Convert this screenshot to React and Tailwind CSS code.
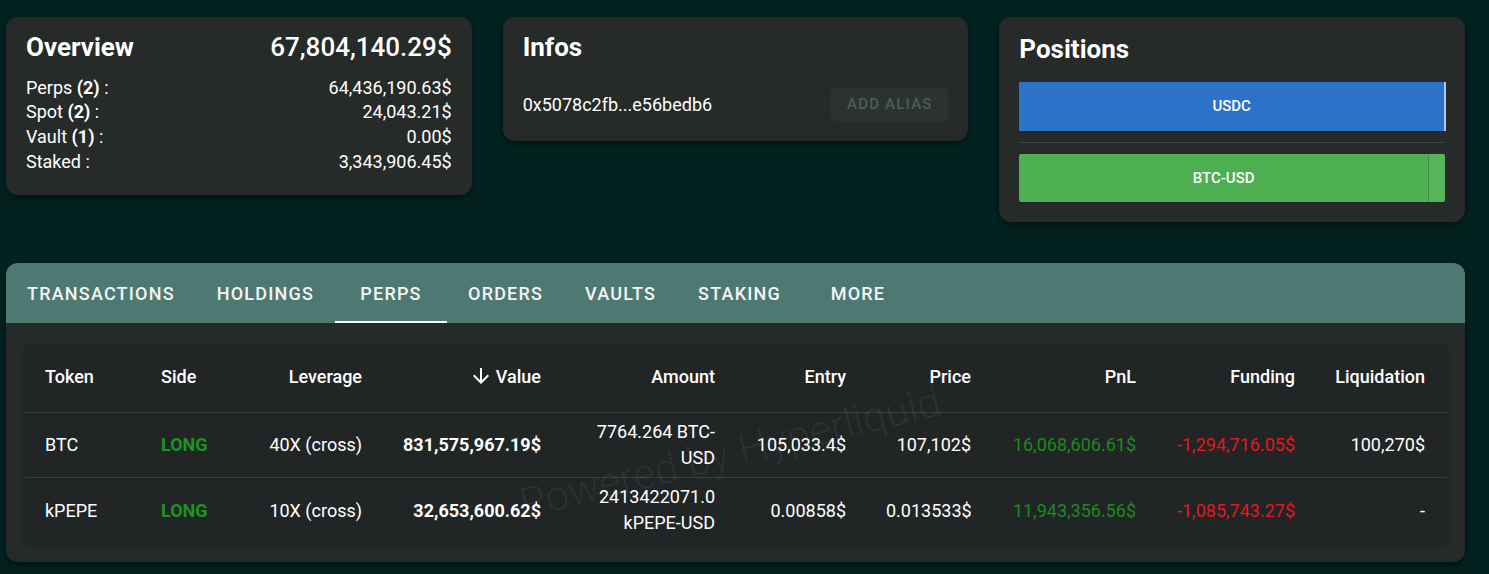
import React from "react";

const rows = [
  {
    token: "BTC",
    side: "LONG",
    lev: "40X (cross)",
    value: "831,575,967.19$",
    amount: ["7764.264 BTC-", "USD"],
    entry: "105,033.4$",
    price: "107,102$",
    pnl: "16,068,606.61$",
    funding: "-1,294,716.05$",
    liq: "100,270$",
  },
  {
    token: "kPEPE",
    side: "LONG",
    lev: "10X (cross)",
    value: "32,653,600.62$",
    amount: ["2413422071.0", "kPEPE-USD"],
    entry: "0.00858$",
    price: "0.013533$",
    pnl: "11,943,356.56$",
    funding: "-1,085,743.27$",
    liq: "-",
  },
];

const tabs = ["TRANSACTIONS", "HOLDINGS", "PERPS", "ORDERS", "VAULTS", "STAKING", "MORE"];

function ArrowDown() {
  return (
    <svg width="24" height="24" viewBox="0 0 24 24" fill="currentColor" className="shrink-0 mr-[3px] -ml-[4px]">
      <path d="M20 12l-1.41-1.41L13 16.17V4h-2v12.17l-5.58-5.59L4 12l8 8 8-8z" />
    </svg>
  );
}

export default function App() {
  return (
    <div
      className="min-h-[574px] bg-[#03221f] text-white pt-[17px] pl-[6px]"
      style={{ fontFamily: "Roboto, 'Liberation Sans', sans-serif" }}
    >
      <div className="w-[1459px]">
        <div className="grid grid-cols-3 gap-[31px] items-start">
          {/* Overview */}
          <div className="bg-[#262a29] rounded-[12px] shadow-[0_3px_6px_rgba(0,0,0,0.45)] px-[20px] pt-[16px] pb-[20px]">
            <div className="flex justify-between items-center h-[28px]">
              <span className="text-[26px] font-bold leading-[28px]">Overview</span>
              <span className="text-[26px] font-medium leading-[28px]">67,804,140.29$</span>
            </div>
            <div className="mt-[14.5px] text-[18px] leading-[24.75px]">
              <div className="flex justify-between">
                <span>
                  Perps <b>(2)</b> :
                </span>
                <span>64,436,190.63$</span>
              </div>
              <div className="flex justify-between">
                <span>
                  Spot <b>(2)</b> :
                </span>
                <span>24,043.21$</span>
              </div>
              <div className="flex justify-between">
                <span>
                  Vault <b>(1)</b> :
                </span>
                <span>0.00$</span>
              </div>
              <div className="flex justify-between">
                <span>Staked :</span>
                <span>3,343,906.45$</span>
              </div>
            </div>
          </div>

          {/* Infos */}
          <div className="bg-[#262a29] rounded-[12px] shadow-[0_3px_6px_rgba(0,0,0,0.45)] px-[20px] pt-[16px] pb-[20px]">
            <div className="h-[28px] text-[26px] font-bold leading-[28px]">Infos</div>
            <div className="mt-[27px] flex justify-between items-center">
              <span className="text-[18px]">0x5078c2fb...e56bedb6</span>
              <button className="h-[33px] w-[117px] rounded-[4px] bg-[#2b3231] text-[#4b5c59] text-[15px] font-medium tracking-[1.2px]">
                ADD ALIAS
              </button>
            </div>
          </div>

          {/* Positions */}
          <div className="bg-[#262a29] rounded-[12px] shadow-[0_3px_6px_rgba(0,0,0,0.45)] pl-[20px] pr-[19px] pt-[16px] pb-[20px]">
            <div className="h-[32px] text-[26px] font-bold leading-[32px]">Positions</div>
            <div className="mt-[17px] flex h-[49px]">
              <div className="flex-1 bg-[#2a73c8] flex items-center justify-center text-[15px] font-medium">
                USDC
              </div>
              <div className="w-[2px] bg-[#a9c7ee]"></div>
            </div>
            <div className="my-[11px] h-px bg-[#3d4342] mx-[1px]"></div>
            <div className="flex h-[48px] mr-[1px] rounded-[2px] overflow-hidden">
              <div className="flex-1 bg-[#4caf50] flex items-center justify-center text-[15px] font-medium">
                BTC-USD
              </div>
              <div className="w-px bg-[#3f8f42]"></div>
              <div className="w-[16px] bg-[#57b55b]"></div>
            </div>
          </div>
        </div>

        {/* Tabs panel */}
        <div className="mt-[41px] rounded-[12px] overflow-hidden bg-[#262a29] shadow-[0_3px_6px_rgba(0,0,0,0.45)]">
          <div className="flex h-[60px] bg-[#4e7972]">
            {tabs.map((t) => (
              <div
                key={t}
                className="relative min-w-[112px] px-[21px] flex items-center justify-center text-[18px] font-medium tracking-[1.2px] text-[#f2f5f4]"
              >
                {t}
                {t === "PERPS" && <span className="absolute left-0 right-0 bottom-0 h-[2px] bg-white"></span>}
              </div>
            ))}
          </div>
          <div className="pl-[19px] pr-[18px] pt-[22px] pb-[19px]">
            <div className="relative overflow-hidden rounded-[4px] bg-[#222525] shadow-[0_1px_4px_rgba(0,0,0,0.35)]">
              <table className="w-full table-fixed border-collapse text-[18px]">
                <colgroup>
                  <col className="w-[116px]" />
                  <col className="w-[109px]" />
                  <col className="w-[132px]" />
                  <col className="w-[179px]" />
                  <col className="w-[174px]" />
                  <col className="w-[131px]" />
                  <col className="w-[125px]" />
                  <col className="w-[165px]" />
                  <col className="w-[159px]" />
                  <col className="w-[132px]" />
                </colgroup>
                <thead>
                  <tr className="h-[67px] border-b border-[#3a3f3e]">
                    <th className="px-[20px] pb-[4px] text-left font-medium">Token</th>
                    <th className="px-[20px] pb-[4px] text-left font-medium">Side</th>
                    <th className="px-[20px] pb-[4px] text-right font-medium">Leverage</th>
                    <th className="px-[20px] pb-[4px] text-right font-medium">
                      <div className="flex items-center justify-end h-[24px]">
                        <ArrowDown />
                        <span>Value</span>
                      </div>
                    </th>
                    <th className="px-[20px] pb-[4px] text-right font-medium">Amount</th>
                    <th className="px-[20px] pb-[4px] text-right font-medium">Entry</th>
                    <th className="px-[20px] pb-[4px] text-right font-medium">Price</th>
                    <th className="px-[20px] pb-[4px] text-right font-medium">PnL</th>
                    <th className="px-[20px] pb-[4px] text-right font-medium">Funding</th>
                    <th className="pl-[10px] pr-[22px] pb-[4px] text-right font-medium whitespace-nowrap">Liquidation</th>
                  </tr>
                </thead>
                <tbody>
                  {rows.map((r, i) => (
                    <tr
                      key={r.token}
                      className={i === 0 ? "h-[65px] border-b border-[#3a3f3e]" : "h-[66px]"}
                    >
                      <td className="px-[20px] text-left">{r.token}</td>
                      <td className="px-[20px] text-left font-bold text-[#1a961a]">{r.side}</td>
                      <td className="pl-[10px] pr-[20px] text-right whitespace-nowrap">{r.lev}</td>
                      <td className="px-[20px] text-right font-bold">{r.value}</td>
                      <td className="px-[20px] text-right leading-[26px]">
                        {r.amount[0]}
                        <br />
                        {r.amount[1]}
                      </td>
                      <td className="px-[20px] text-right">{r.entry}</td>
                      <td className="px-[20px] text-right">{r.price}</td>
                      <td className="px-[20px] text-right text-[#1c8a1c]">{r.pnl}</td>
                      <td className="px-[20px] text-right text-[#e5171c]">{r.funding}</td>
                      <td className="pl-[20px] pr-[22px] text-right">{r.liq}</td>
                    </tr>
                  ))}
                </tbody>
              </table>
              <div className="pointer-events-none absolute left-[480px] top-[76px] w-[450px] text-center text-[42px] font-light text-white/[0.06] -rotate-[14deg] whitespace-nowrap">
                Powered by Hyperliquid
              </div>
            </div>
          </div>
        </div>
      </div>
    </div>
  );
}
